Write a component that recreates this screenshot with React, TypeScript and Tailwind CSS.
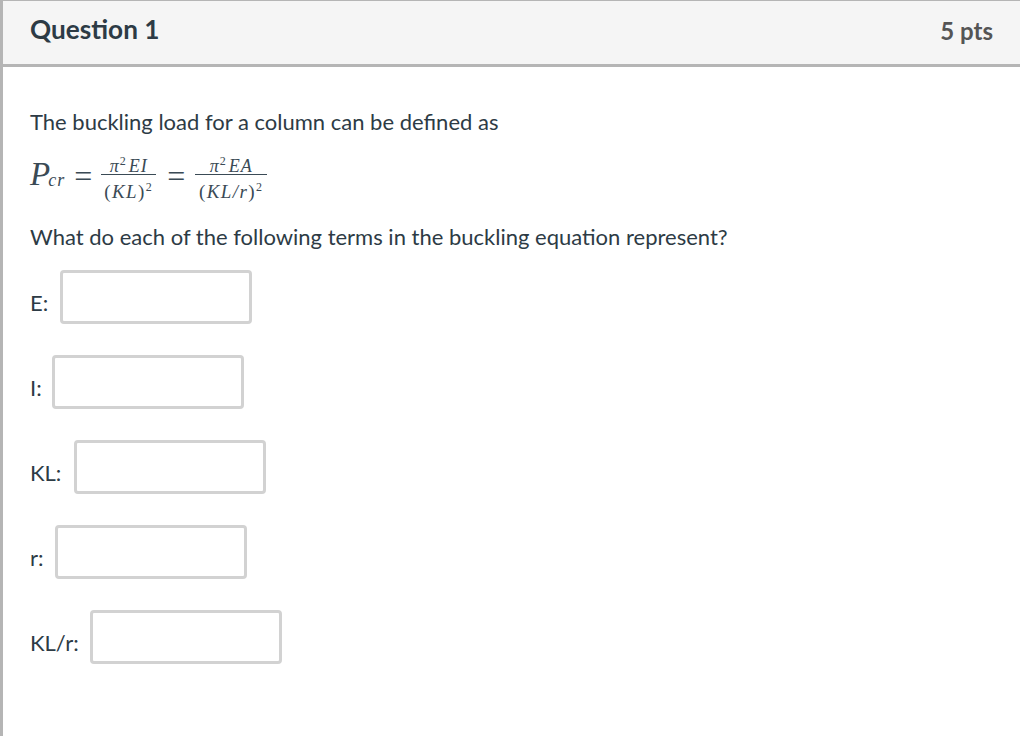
import React from 'react';

const serif = "font-['Liberation_Serif',serif]";

const Fraction = ({ top, bottom, className }: { top: React.ReactNode; bottom: React.ReactNode; className: string }) => (
  <div className={`flex flex-col items-center ${className}`}>
    <div className="h-[20px] text-[18px] leading-[24px] tracking-[1px] whitespace-nowrap">{top}</div>
    <div className="w-full h-px bg-[#3a4a55]" />
    <div className="h-[24px] text-[19px] leading-[34px] tracking-[1.4px] whitespace-nowrap">{bottom}</div>
  </div>
);

const Sup = ({ children, className = '' }: { children: React.ReactNode; className?: string }) => (
  <span className={`not-italic text-[12px] align-[7px] leading-none ${className}`}>{children}</span>
);

const blanks = [
  { label: 'E:', gap: 'ml-[12px]' },
  { label: 'I:', gap: 'ml-[10px]' },
  { label: 'KL:', gap: 'ml-[13px]' },
  { label: 'r:', gap: 'ml-[11px]' },
  { label: 'KL/r:', gap: 'ml-[11px]' },
];

export default function App() {
  return (
    <div className="h-[736px] w-[1020px] overflow-hidden bg-white border-l-[3px] border-[#b5b5b5] font-['Lato',sans-serif] text-[#2d3b45]">
      {/* Question header */}
      <div className="h-[67px] bg-[#f5f5f5] border-t border-b-[3px] border-[#b5b5b5] flex items-center justify-between pl-[27px] pr-[27px]">
        <h2 className="text-[26.2px] font-bold leading-none -mt-[7px]">Question 1</h2>
        <div className="text-[24px] font-bold leading-none text-[#555] -mt-[4px]">5 pts</div>
      </div>

      <div className="pl-[27px] pt-[42px]">
        <p className="text-[22px] leading-[26px]">The buckling load for a column can be defined as</p>

        {/* Buckling equation */}
        <div className={`flex items-center h-[46px] mt-[18px] ${serif} text-[#3a4a55]`}>
          <span className="italic text-[33px] leading-none -mt-[3px]">P</span>
          <span className="italic text-[18px] leading-none mt-[8px] -ml-[2px] tracking-[1px]">cr</span>
          <span className="text-[32px] leading-none ml-[9px] -mt-[1px]">=</span>
          <Fraction
            className="ml-[9px] w-[55px]"
            top={<i>π<Sup className="mr-[2px]">2</Sup>EI</i>}
            bottom={<i><span className="not-italic">(</span>KL<span className="not-italic">)</span><Sup>2</Sup></i>}
          />
          <span className="text-[32px] leading-none ml-[11px] -mt-[1px]">=</span>
          <Fraction
            className="ml-[10px] w-[72px]"
            top={<i>π<Sup className="mr-[2px]">2</Sup>EA</i>}
            bottom={<i><span className="not-italic">(</span>KL/r<span className="not-italic">)</span><Sup>2</Sup></i>}
          />
        </div>

        <p className="text-[22px] leading-[26px] mt-[25px]">What do each of the following terms in the buckling equation represent?</p>

        <div className="flex flex-col gap-[31px] mt-[20px]">
          {blanks.map((b) => (
            <div key={b.label} className="flex items-center h-[54px]">
              <span className="text-[22px] leading-[26px] mt-[12px]">{b.label}</span>
              <input className={`${b.gap} w-[192px] h-[54px] bg-white border-[3px] border-[#d2d2d2] rounded-[4px]`} />
            </div>
          ))}
        </div>
      </div>
    </div>
  );
}
